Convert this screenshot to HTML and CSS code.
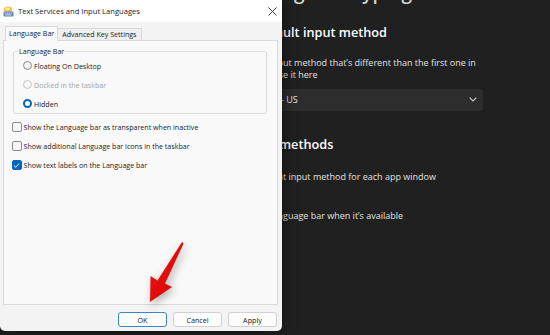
FILE: index.html
```html
<!DOCTYPE html>
<html lang="en">
<head>
    <meta charset="UTF-8">
    <title>Advanced keyboard settings</title>
    <link rel="stylesheet" href="styles.css">
</head>
<body>
    <!-- settings page behind the dialog: each line is split where the dialog edge cuts it -->
    <main class="settings">
        <div class="line crumb">
            <span class="cut"><span>Time &amp; langu</span></span>
            <span class="vis"><span>age</span><span class="sep">›</span><span>Typing</span><span class="sep sep-2">›</span><span>Advanced keyboard settings</span></span>
        </div>

        <h2 class="line heading override"><span class="cut"><span>Override for defa</span></span><span class="vis">ult input method</span></h2>
        <p class="line text desc"><span class="cut"><span>If you want to use an inp</span></span><span class="vis">ut method that’s different than the first one in</span></p>
        <p class="line text"><span class="cut"><span>your language list, choos</span></span><span class="vis">e it here</span></p>

        <div class="select">
            <span class="cut"><span>English (United States)&nbsp;</span></span>
            <span class="vis">- US</span>
            <svg class="chevron" width="8" height="5" viewBox="0 0 8 5"><path d="M0.7 0.7 L4 4 L7.3 0.7" fill="none" stroke="#c9c9c9" stroke-width="1.2"/></svg>
        </div>

        <h2 class="line heading switching"><span class="cut"><span>Switching input </span></span><span class="vis">methods</span></h2>
        <p class="line text opt-1"><span class="cut"><span>Let me use a differen</span></span><span class="vis">t input method for each app window</span></p>
        <p class="line text opt-2"><span class="cut"><span>Use the desktop lan</span></span><span class="vis">guage bar when it’s available</span></p>
    </main>

    <div class="dialog">
        <div class="titlebar">
            <svg class="app-icon" width="11" height="11" viewBox="0 0 11 11">
                <ellipse cx="5" cy="3.6" rx="4.2" ry="3.2" fill="#f2c14e"/>
                <ellipse cx="4.4" cy="3" rx="2.2" ry="1.4" fill="#fbe3a0"/>
                <rect x="0.5" y="5.6" width="10" height="5" rx="1" fill="#5f84b5"/>
                <rect x="1.6" y="6.6" width="1.4" height="1" fill="#dce7f5"/>
                <rect x="3.6" y="6.6" width="1.4" height="1" fill="#dce7f5"/>
                <rect x="5.6" y="6.6" width="1.4" height="1" fill="#dce7f5"/>
                <rect x="7.6" y="6.6" width="1.4" height="1" fill="#dce7f5"/>
                <rect x="2.4" y="8.4" width="6" height="1" fill="#dce7f5"/>
            </svg>
            <span class="title">Text Services and Input Languages</span>
            <svg class="close" width="9" height="9" viewBox="0 0 9 9"><path d="M0.5 0.5 L8.5 8.5 M8.5 0.5 L0.5 8.5" stroke="#2b2b2b" stroke-width="0.9"/></svg>
        </div>

        <div class="tabs">
            <div class="tab active">Language Bar</div>
            <div class="tab">Advanced Key Settings</div>
        </div>

        <div class="panel">
            <fieldset class="group">
                <legend>Language Bar</legend>
                <label class="option"><span class="radio"></span>Floating On Desktop</label>
                <label class="option disabled"><span class="radio"></span>Docked in the taskbar</label>
                <label class="option"><span class="radio on"></span>Hidden</label>
            </fieldset>

            <div class="checks">
                <label class="option"><span class="box"></span>Show the Language bar as transparent when inactive</label>
                <label class="option"><span class="box"></span>Show additional Language bar icons in the taskbar</label>
                <label class="option">
                    <span class="box on"><svg width="7" height="7" viewBox="0 0 7 7"><path d="M1 3.6 L2.8 5.3 L6 1.6" fill="none" stroke="#fff" stroke-width="1"/></svg></span>
                    Show text labels on the Language bar
                </label>
            </div>
        </div>

        <div class="buttons">
            <button class="btn default">OK</button>
            <button class="btn">Cancel</button>
            <button class="btn">Apply</button>
        </div>
    </div>

    <svg class="arrow" width="550" height="335" viewBox="0 0 550 335">
        <defs>
            <linearGradient id="red" x1="0" y1="0" x2="1" y2="1">
                <stop offset="0" stop-color="#f01818"/>
                <stop offset="1" stop-color="#d40000"/>
            </linearGradient>
        </defs>
        <polygon points="182,242 183.6,243.5 165,283.5 172,287 150,302 150.5,276 157.5,280.5" fill="url(#red)"/>
    </svg>
</body>
</html>
```

FILE: styles.css
```css
* {
    margin: 0;
    padding: 0;
    box-sizing: border-box;
}

body {
    width: 550px;
    height: 335px;
    overflow: hidden;
    position: relative;
    background: #202020;
    color: #e6e6e6;
    font-family: 'Open Sans', 'Noto Sans', sans-serif;
}

/* ---------- settings page ---------- */

.settings {
    display: flex;
    flex-direction: column;
}

.line {
    display: grid;
    grid-template-columns: 283px auto;
    white-space: nowrap;
}

.cut {
    display: flex;
    justify-content: flex-end;
    overflow: hidden;
}

.crumb {
    margin-top: -20px;
    font-size: 19px;
    font-weight: 600;
    line-height: 24px;
    color: #d2d2d2;
}

.crumb .vis {
    display: flex;
}

.crumb .sep {
    width: 36px;
    font-size: 11px;
    text-align: center;
    color: #9a9a9a;
}

.crumb .sep-2 {
    width: 30px;
}

.heading {
    font-size: 12.7px;
    font-weight: 600;
    line-height: 16px;
    color: #fff;
}

.text {
    font-size: 9px;
    line-height: 12.5px;
    color: #e2e2e2;
}

.override {
    margin-top: 20px;
}

.desc {
    margin-top: 16.5px;
}

.select {
    display: grid;
    grid-template-columns: 283px 1fr auto;
    align-items: center;
    width: 483px;
    height: 22px;
    margin-top: 7px;
    padding-right: 6px;
    background: #2d2d2d;
    border-radius: 0 3px 3px 0;
    font-size: 9px;
    white-space: nowrap;
}

.select .vis {
    margin-left: -2px;
}

.switching {
    margin-top: 25px;
}

.switching .vis {
    margin-left: -4px;
}

.opt-1 {
    margin-top: 19px;
}

.opt-2 {
    margin-top: 26.5px;
}

/* ---------- dialog ---------- */

.dialog {
    position: absolute;
    left: 0;
    top: 0;
    z-index: 1;
    width: 282px;
    height: 331px;
    display: flex;
    flex-direction: column;
    background: #f3f3f3;
    border-radius: 0 0 5px 5px;
    box-shadow: 0 0 16px rgba(0, 0, 0, 0.55);
    font-size: 7.1px;
    color: #1b1b1b;
}

.titlebar {
    height: 22px;
    display: flex;
    align-items: center;
    padding: 0 5px 0 3px;
    background: #fff;
}

.app-icon {
    margin-right: 4px;
}

.title {
    flex: 1;
    font-size: 7.6px;
}

.tabs {
    display: flex;
    align-items: flex-end;
    padding: 4px 0 0 5px;
    margin-bottom: -1px;
    position: relative;
    z-index: 1;
}

.tab {
    height: 12px;
    margin-bottom: 1px;
    margin-left: -1px;
    padding: 0 4px;
    border: 1px solid #d9d9d9;
    border-bottom: none;
    background: #f0f0f0;
    line-height: 11px;
}

.tab.active {
    height: 15px;
    margin: 0;
    padding: 0 3px;
    background: #f9f9f9;
    line-height: 13px;
}

.panel {
    height: 265px;
    margin: 0 4px 0 3px;
    padding: 5px 0 0 8px;
    background: #f9f9f9;
    border: 1px solid #d9d9d9;
}

.group {
    margin: 0 10px 0 1px;
    padding: 0 0 0 9px;
    border: 1px solid #dcdcdc;
    border-radius: 2px;
}

.group legend {
    margin-left: -5px;
    padding: 0 1px;
    line-height: 10px;
}

.option {
    display: flex;
    align-items: center;
    gap: 2px;
    height: 19px;
}

.option.disabled {
    color: #a3a3a3;
}

.radio {
    width: 9px;
    height: 9px;
    border: 1px solid #8b8b8b;
    border-radius: 50%;
    background: #f4f4f4;
}

.disabled .radio {
    border-color: #c6c6c6;
    background: #f7f7f7;
}

.radio.on {
    border: 2.6px solid #0067c0;
    background: #fff;
}

.checks {
    margin-top: 3.5px;
}

.box {
    width: 9.5px;
    height: 9.5px;
    display: flex;
    align-items: center;
    justify-content: center;
    border: 1px solid #8b8b8b;
    border-radius: 2px;
    background: #f6f6f6;
}

.box.on {
    border-color: #0067c0;
    background: #0067c0;
}

.buttons {
    display: flex;
    justify-content: flex-end;
    gap: 6px;
    padding: 7px 5px 0 0;
}

.btn {
    width: 49px;
    height: 15px;
    border: 1px solid #d0d0d0;
    border-radius: 3px;
    background: #fdfdfd;
    font-family: inherit;
    font-size: 7.2px;
    color: #1b1b1b;
}

.btn.default {
    border-color: #3b84c9;
}

/* ---------- annotation ---------- */

.arrow {
    position: absolute;
    left: 0;
    top: 0;
    z-index: 2;
    pointer-events: none;
    filter: drop-shadow(2px 3px 4px rgba(0, 0, 0, 0.3));
}
```
